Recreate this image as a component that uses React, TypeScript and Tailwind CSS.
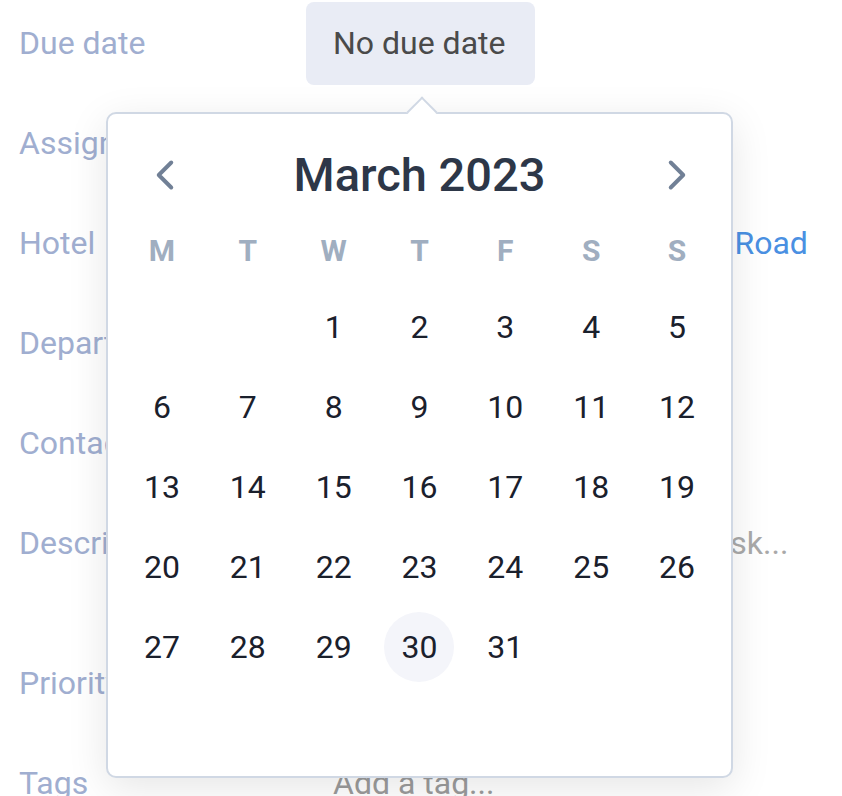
import { ChevronLeft, ChevronRight } from "lucide-react";

const rows = [
  { label: "Due date", h: "h-[100px]" },
  { label: "Assignee", h: "h-[100px]" },
  { label: "Hotel", h: "h-[100px]" },
  { label: "Department", h: "h-[100px]" },
  { label: "Contact", h: "h-[100px]" },
  { label: "Description", h: "h-[140px]" },
  { label: "Priority", h: "h-[100px]" },
  { label: "Tags", h: "h-[100px]" },
];

const weekdays = ["M", "T", "W", "T", "F", "S", "S"];

// March 2023 starts on a Wednesday
const days: (number | null)[] = [null, null, ...Array.from({ length: 31 }, (_, i) => i + 1)];

function Value({ label }: { label: string }) {
  if (label === "Due date") {
    return (
      <button className="ml-[-1px] h-[83px] rounded-lg bg-[#e9ecf5] pl-[27px] pr-[29px] text-[32px] text-[#4a4a4a]">
        No due date
      </button>
    );
  }
  if (label === "Hotel") {
    return <span className="pl-[25px] text-[32px] text-[#4a90e2]">Hilton Garden Inn, 79 Milton Road</span>;
  }
  if (label === "Description") {
    return <span className="pl-[26px] text-[32px] text-[#a9a9a9]">Type a description for the task...</span>;
  }
  if (label === "Tags") {
    return <span className="pl-[26px] text-[32px] text-[#9b9b9b]">Add a tag...</span>;
  }
  return null;
}

function DatePopover() {
  return (
    <div className="absolute left-[106px] top-[112px] h-[666px] w-[627px] rounded-[10px] border-2 border-[#d0d8e4] bg-white shadow-[0_10px_40px_rgba(0,0,0,0.1)]">
      <div className="absolute left-[303px] top-[-13px] h-[22px] w-[22px] rotate-45 border-l-2 border-t-2 border-[#d0d8e4] bg-white" />
      <div className="relative px-[11px] pt-[23px]">
        <div className="grid h-[76px] grid-cols-7 items-center">
          <div className="flex justify-center pl-[6px]">
            <ChevronLeft className="h-[50px] w-[50px] text-[#718096]" strokeWidth={1.9} />
          </div>
          <div className="col-span-5 text-center text-[47px] font-medium text-[#2d3748]">March 2023</div>
          <div className="flex justify-center">
            <ChevronRight className="h-[50px] w-[50px] text-[#718096]" strokeWidth={1.9} />
          </div>
        </div>
        <div className="grid h-[74px] grid-cols-7 items-center">
          {weekdays.map((d, i) => (
            <div key={i} className="text-center text-[30px] font-bold text-[#a0aec0]">
              {d}
            </div>
          ))}
        </div>
        <div className="grid grid-cols-7 auto-rows-[80px]">
          {days.map((d, i) => (
            <div key={i} className="flex items-center justify-center">
              {d && (
                <span
                  className={
                    d === 30
                      ? "flex h-[70px] w-[70px] items-center justify-center rounded-full bg-[#f4f5fa] text-[32px] text-[#1a202c]"
                      : "text-[32px] text-[#1a202c]"
                  }
                >
                  {d}
                </span>
              )}
            </div>
          ))}
        </div>
      </div>
    </div>
  );
}

export default function App() {
  return (
    <div className="relative h-[796px] w-[842px] overflow-hidden bg-white font-['Roboto',sans-serif]">
      <div className="mt-[-7px] flex flex-col">
        {rows.map((r) => (
          <div key={r.label} className={`flex ${r.h}`}>
            <div className="w-[307px] shrink-0 pl-[19px] text-[32px] leading-[100px] text-[#a0aed0]">{r.label}</div>
            <div className="flex h-[100px] items-center">
              <Value label={r.label} />
            </div>
          </div>
        ))}
      </div>
      <DatePopover />
    </div>
  );
}
